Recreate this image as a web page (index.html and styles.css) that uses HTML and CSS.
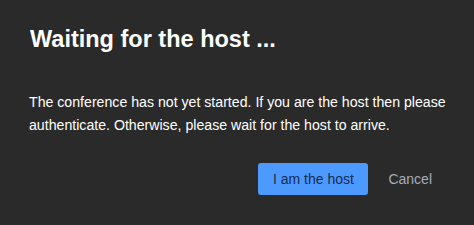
FILE: index.html
```html
<!DOCTYPE html>
<html>
<head>
<meta charset="utf-8">
<link rel="stylesheet" href="styles.css">
</head>
<body>
<div class="dialog">
  <h1 class="title">Waiting for the host ...</h1>
  <p class="message">The conference has not yet started. If you are the host then please authenticate. Otherwise, please wait for the host to arrive.</p>
  <div class="actions">
    <button class="btn btn-primary">I am the host</button>
    <button class="btn btn-link">Cancel</button>
  </div>
</div>
</body>
</html>
```
FILE: styles.css
```css
html, body {
  margin: 0;
  padding: 0;
  background: #2a2a2a;
  width: 474px;
  height: 225px;
  overflow: hidden;
}
.dialog {
  box-sizing: border-box;
  width: 474px;
  height: 225px;
  padding: 23px 30px 0 29px;
  font-family: "Liberation Sans", Arial, sans-serif;
  display: flex;
  flex-direction: column;
}
.title {
  margin: 0 0 0 1px;
  font-size: 23.5px;
  line-height: 32px;
  font-weight: bold;
  color: #ffffff;
}
.message {
  margin: 36px -12px 0 0;
  font-size: 14.15px;
  line-height: 23px;
  color: #ffffff;
}
.actions {
  display: flex;
  justify-content: flex-end;
  align-items: center;
  gap: 8px;
  margin-top: 26px;
}
.btn {
  font-family: inherit;
  font-size: 14px;
  border: none;
  border-radius: 3px;
  height: 32px;
  padding: 0 12px;
  cursor: pointer;
}
.btn-primary {
  background: #4c9aff;
  color: #172b4d;
  width: 110px;
}
.btn-link {
  background: transparent;
  color: #a5adba;
}
```
